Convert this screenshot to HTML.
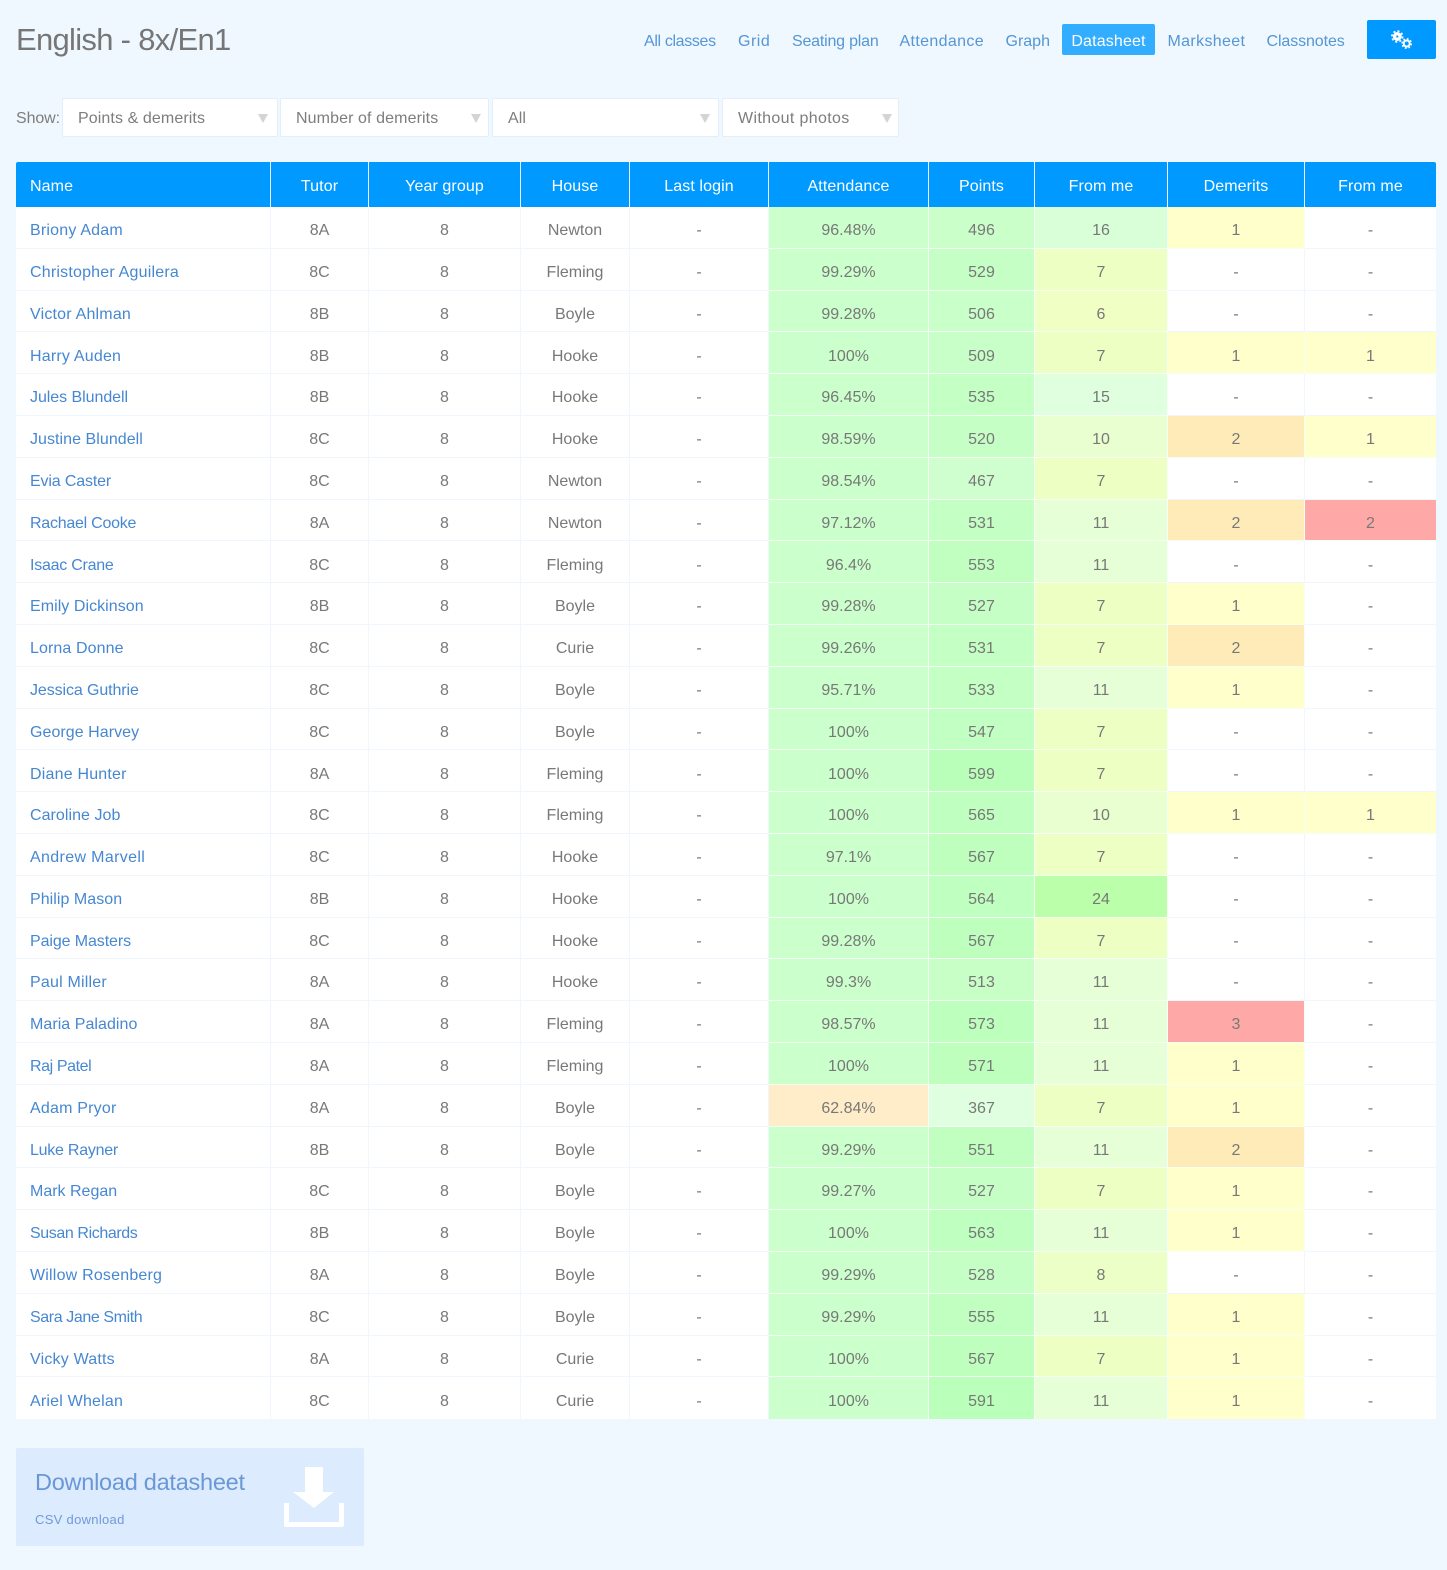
<!DOCTYPE html>
<html lang="en"><head><meta charset="utf-8"><title>English - 8x/En1</title>
<style>
*{box-sizing:border-box}
html,body{margin:0;padding:0}
body{width:1447px;height:1570px;background:#eff7ff;font-family:"Liberation Sans",sans-serif;position:relative;overflow:hidden;color:#666}
.abs{position:absolute;white-space:nowrap}
h1{position:absolute;left:16px;top:21px;margin:0;font-weight:400;font-size:31px;line-height:38px;color:#767676;letter-spacing:-.7px;white-space:nowrap}
.nav{position:absolute;top:24px;height:31px;line-height:35px;font-size:16px;color:#5596d4;letter-spacing:.35px;white-space:nowrap}
.nav.on{background:#33adff;color:#fff;border-radius:2px;left:1062px;width:93px;text-align:center;letter-spacing:.15px}
.btn{position:absolute;left:1367px;top:20px;width:69px;height:39px;background:#0099ff;border-radius:2px}
.sel{position:absolute;top:98px;height:39px;background:#fff;border:1px solid #e2eefc;border-radius:2px;line-height:39px;font-size:16px;color:#7d7d7d;padding-left:15px;letter-spacing:.1px;white-space:nowrap}
.sel i{position:absolute;right:7px;top:15px;width:0;height:0;border-left:5px solid transparent;border-right:5px solid transparent;border-top:9px solid #d4d4d4}
table{position:absolute;left:16px;top:162px;width:1420px;border-collapse:separate;border-spacing:0;table-layout:fixed;background:#fff}
th{height:45px;background:#0099ff;color:#fff;font-weight:400;font-size:16px;border-right:1px solid #eef6ff;padding:4px 0 0;letter-spacing:.1px}
th:first-child{text-align:left;padding-left:14px;border-top-left-radius:2px}
th:last-child{border-right:0;border-top-right-radius:2px}
td{height:41.8px;padding:7.5px 0 0;text-align:center;font-size:16px;color:#787878;border-right:1px solid #eff6fe;border-bottom:1px solid #eff6fe}
td[bgcolor]{border-color:#f6fff6}
td:first-child{text-align:left;padding-left:14px;color:#4687d2;letter-spacing:.2px}
td:last-child{border-right:0}
tr:last-child td{border-bottom:0}
.dl{position:absolute;left:16px;top:1448px;width:348px;height:98px;background:#dcebfe;border-radius:2px}
</style></head><body>
<h1>English - 8x/En1</h1>
<span class="nav" style="left:644px;letter-spacing:-.35px">All classes</span>
<span class="nav" style="left:738px;letter-spacing:.5px">Grid</span>
<span class="nav" style="left:792px;letter-spacing:-.2px">Seating plan</span>
<span class="nav" style="left:899.5px">Attendance</span>
<span class="nav" style="left:1005.5px;letter-spacing:0">Graph</span>
<span class="nav on">Datasheet</span>
<span class="nav" style="left:1167.5px">Marksheet</span>
<span class="nav" style="left:1266.5px;letter-spacing:-.1px">Classnotes</span>
<div class="btn"><svg width="69" height="39" viewBox="0 0 69 39" style="display:block"><circle cx="30.3" cy="16.5" r="2.8" fill="none" stroke="#fff" stroke-width="3.4"/><circle cx="30.3" cy="16.5" r="5.4" fill="none" stroke="#fff" stroke-width="1.6" stroke-dasharray="2.1 2.14"/><circle cx="39.7" cy="23.5" r="3" fill="none" stroke="#fff" stroke-width="2"/><circle cx="39.7" cy="23.5" r="4.6" fill="none" stroke="#fff" stroke-width="1.6" stroke-dasharray="1.8 1.81"/></svg></div>
<div class="abs" style="left:16px;top:99px;line-height:39px;font-size:16px;color:#7d7d7d;letter-spacing:-.1px">Show:</div>
<div class="sel" style="left:62px;width:216px">Points &amp; demerits<i style="right:9px"></i></div>
<div class="sel" style="left:280px;width:209px">Number of demerits<i></i></div>
<div class="sel" style="left:492px;width:227px">All<i style="right:8px"></i></div>
<div class="sel" style="left:722px;width:177px;letter-spacing:.35px">Without photos<i style="right:6px"></i></div>
<table>
<colgroup><col style="width:255px"><col style="width:98px"><col style="width:152px"><col style="width:109px"><col style="width:139px"><col style="width:160px"><col style="width:106px"><col style="width:133px"><col style="width:137px"><col style="width:131px"></colgroup>
<thead><tr><th>Name</th><th>Tutor</th><th>Year group</th><th>House</th><th>Last login</th><th>Attendance</th><th>Points</th><th>From me</th><th>Demerits</th><th>From me</th></tr></thead>
<tbody>
<tr><td>Briony Adam</td><td>8A</td><td>8</td><td>Newton</td><td>-</td><td bgcolor="#cbffcb">96.48%</td><td bgcolor="#caffca">496</td><td bgcolor="#d8ffd8">16</td><td bgcolor="#ffffcc">1</td><td>-</td></tr>
<tr><td>Christopher Aguilera</td><td>8C</td><td>8</td><td>Fleming</td><td>-</td><td bgcolor="#cbffcb">99.29%</td><td bgcolor="#c5ffc5">529</td><td bgcolor="#eeffc4">7</td><td>-</td><td>-</td></tr>
<tr><td>Victor Ahlman</td><td>8B</td><td>8</td><td>Boyle</td><td>-</td><td bgcolor="#cbffcb">99.28%</td><td bgcolor="#c9ffc9">506</td><td bgcolor="#f0ffc4">6</td><td>-</td><td>-</td></tr>
<tr><td>Harry Auden</td><td>8B</td><td>8</td><td>Hooke</td><td>-</td><td bgcolor="#cbffcb">100%</td><td bgcolor="#c8ffc8">509</td><td bgcolor="#eeffc4">7</td><td bgcolor="#ffffcc">1</td><td bgcolor="#ffffcc">1</td></tr>
<tr><td style="letter-spacing:-.05px">Jules Blundell</td><td>8B</td><td>8</td><td>Hooke</td><td>-</td><td bgcolor="#cbffcb">96.45%</td><td bgcolor="#c4ffc4">535</td><td bgcolor="#dfffdf">15</td><td>-</td><td>-</td></tr>
<tr><td style="letter-spacing:.05px">Justine Blundell</td><td>8C</td><td>8</td><td>Hooke</td><td>-</td><td bgcolor="#cbffcb">98.59%</td><td bgcolor="#c6ffc6">520</td><td bgcolor="#e9ffcf">10</td><td bgcolor="#feebb8">2</td><td bgcolor="#ffffcc">1</td></tr>
<tr><td style="letter-spacing:-.15px">Evia Caster</td><td>8C</td><td>8</td><td>Newton</td><td>-</td><td bgcolor="#cbffcb">98.54%</td><td bgcolor="#cfffcf">467</td><td bgcolor="#eeffc4">7</td><td>-</td><td>-</td></tr>
<tr><td style="letter-spacing:-.25px">Rachael Cooke</td><td>8A</td><td>8</td><td>Newton</td><td>-</td><td bgcolor="#cbffcb">97.12%</td><td bgcolor="#c4ffc4">531</td><td bgcolor="#e6ffd6">11</td><td bgcolor="#feebb8">2</td><td bgcolor="#ffa8a8">2</td></tr>
<tr><td style="letter-spacing:-.25px">Isaac Crane</td><td>8C</td><td>8</td><td>Fleming</td><td>-</td><td bgcolor="#cbffcb">96.4%</td><td bgcolor="#c1ffc1">553</td><td bgcolor="#e6ffd6">11</td><td>-</td><td>-</td></tr>
<tr><td style="letter-spacing:.05px">Emily Dickinson</td><td>8B</td><td>8</td><td>Boyle</td><td>-</td><td bgcolor="#cbffcb">99.28%</td><td bgcolor="#c5ffc5">527</td><td bgcolor="#eeffc4">7</td><td bgcolor="#ffffcc">1</td><td>-</td></tr>
<tr><td style="letter-spacing:.1px">Lorna Donne</td><td>8C</td><td>8</td><td>Curie</td><td>-</td><td bgcolor="#cbffcb">99.26%</td><td bgcolor="#c4ffc4">531</td><td bgcolor="#eeffc4">7</td><td bgcolor="#feebb8">2</td><td>-</td></tr>
<tr><td style="letter-spacing:-.1px">Jessica Guthrie</td><td>8C</td><td>8</td><td>Boyle</td><td>-</td><td bgcolor="#cbffcb">95.71%</td><td bgcolor="#c4ffc4">533</td><td bgcolor="#e6ffd6">11</td><td bgcolor="#ffffcc">1</td><td>-</td></tr>
<tr><td style="letter-spacing:.05px">George Harvey</td><td>8C</td><td>8</td><td>Boyle</td><td>-</td><td bgcolor="#cbffcb">100%</td><td bgcolor="#c2ffc2">547</td><td bgcolor="#eeffc4">7</td><td>-</td><td>-</td></tr>
<tr><td>Diane Hunter</td><td>8A</td><td>8</td><td>Fleming</td><td>-</td><td bgcolor="#cbffcb">100%</td><td bgcolor="#b9ffb9">599</td><td bgcolor="#eeffc4">7</td><td>-</td><td>-</td></tr>
<tr><td style="letter-spacing:.05px">Caroline Job</td><td>8C</td><td>8</td><td>Fleming</td><td>-</td><td bgcolor="#cbffcb">100%</td><td bgcolor="#bfffbf">565</td><td bgcolor="#e9ffcf">10</td><td bgcolor="#ffffcc">1</td><td bgcolor="#ffffcc">1</td></tr>
<tr><td style="letter-spacing:.35px">Andrew Marvell</td><td>8C</td><td>8</td><td>Hooke</td><td>-</td><td bgcolor="#cbffcb">97.1%</td><td bgcolor="#beffbe">567</td><td bgcolor="#eeffc4">7</td><td>-</td><td>-</td></tr>
<tr><td style="letter-spacing:.05px">Philip Mason</td><td>8B</td><td>8</td><td>Hooke</td><td>-</td><td bgcolor="#cbffcb">100%</td><td bgcolor="#bfffbf">564</td><td bgcolor="#bbffaa">24</td><td>-</td><td>-</td></tr>
<tr><td style="letter-spacing:-.1px">Paige Masters</td><td>8C</td><td>8</td><td>Hooke</td><td>-</td><td bgcolor="#cbffcb">99.28%</td><td bgcolor="#beffbe">567</td><td bgcolor="#eeffc4">7</td><td>-</td><td>-</td></tr>
<tr><td>Paul Miller</td><td>8A</td><td>8</td><td>Hooke</td><td>-</td><td bgcolor="#cbffcb">99.3%</td><td bgcolor="#c7ffc7">513</td><td bgcolor="#e6ffd6">11</td><td>-</td><td>-</td></tr>
<tr><td style="letter-spacing:.05px">Maria Paladino</td><td>8A</td><td>8</td><td>Fleming</td><td>-</td><td bgcolor="#cbffcb">98.57%</td><td bgcolor="#bdffbd">573</td><td bgcolor="#e6ffd6">11</td><td bgcolor="#ffa8a8">3</td><td>-</td></tr>
<tr><td style="letter-spacing:-.4px">Raj Patel</td><td>8A</td><td>8</td><td>Fleming</td><td>-</td><td bgcolor="#cbffcb">100%</td><td bgcolor="#beffbe">571</td><td bgcolor="#e6ffd6">11</td><td bgcolor="#ffffcc">1</td><td>-</td></tr>
<tr><td>Adam Pryor</td><td>8A</td><td>8</td><td>Boyle</td><td>-</td><td bgcolor="#ffecc8">62.84%</td><td bgcolor="#e0ffe0">367</td><td bgcolor="#eeffc4">7</td><td bgcolor="#ffffcc">1</td><td>-</td></tr>
<tr><td style="letter-spacing:-.25px">Luke Rayner</td><td>8B</td><td>8</td><td>Boyle</td><td>-</td><td bgcolor="#cbffcb">99.29%</td><td bgcolor="#c1ffc1">551</td><td bgcolor="#e6ffd6">11</td><td bgcolor="#feebb8">2</td><td>-</td></tr>
<tr><td style="letter-spacing:0">Mark Regan</td><td>8C</td><td>8</td><td>Boyle</td><td>-</td><td bgcolor="#cbffcb">99.27%</td><td bgcolor="#c5ffc5">527</td><td bgcolor="#eeffc4">7</td><td bgcolor="#ffffcc">1</td><td>-</td></tr>
<tr><td style="letter-spacing:-.4px">Susan Richards</td><td>8B</td><td>8</td><td>Boyle</td><td>-</td><td bgcolor="#cbffcb">100%</td><td bgcolor="#bfffbf">563</td><td bgcolor="#e6ffd6">11</td><td bgcolor="#ffffcc">1</td><td>-</td></tr>
<tr><td>Willow Rosenberg</td><td>8A</td><td>8</td><td>Boyle</td><td>-</td><td bgcolor="#cbffcb">99.29%</td><td bgcolor="#c5ffc5">528</td><td bgcolor="#ecffc6">8</td><td>-</td><td>-</td></tr>
<tr><td style="letter-spacing:-.4px">Sara Jane Smith</td><td>8C</td><td>8</td><td>Boyle</td><td>-</td><td bgcolor="#cbffcb">99.29%</td><td bgcolor="#c0ffc0">555</td><td bgcolor="#e6ffd6">11</td><td bgcolor="#ffffcc">1</td><td>-</td></tr>
<tr><td>Vicky Watts</td><td>8A</td><td>8</td><td>Curie</td><td>-</td><td bgcolor="#cbffcb">100%</td><td bgcolor="#beffbe">567</td><td bgcolor="#eeffc4">7</td><td bgcolor="#ffffcc">1</td><td>-</td></tr>
<tr><td>Ariel Whelan</td><td>8C</td><td>8</td><td>Curie</td><td>-</td><td bgcolor="#cbffcb">100%</td><td bgcolor="#baffba">591</td><td bgcolor="#e6ffd6">11</td><td bgcolor="#ffffcc">1</td><td>-</td></tr>
</tbody></table>
<div class="dl">
<div class="abs" style="left:19px;top:19px;font-size:23.5px;line-height:30px;color:#6a97d6;letter-spacing:-.25px">Download datasheet</div>
<div class="abs" style="left:19px;top:64px;font-size:13px;line-height:16px;color:#6f9ad8;letter-spacing:.3px">CSV download</div>
<svg class="abs" style="left:268px;top:19px" width="60" height="60" viewBox="0 0 60 60"><path fill="#fff" d="M21 0H39V25H50L30 41 9 25H21Z"/><path fill="#fff" d="M0 36H5V55H55V36H60V58Q60 60 58 60H2Q0 60 0 58Z"/></svg>
</div>
</body></html>
